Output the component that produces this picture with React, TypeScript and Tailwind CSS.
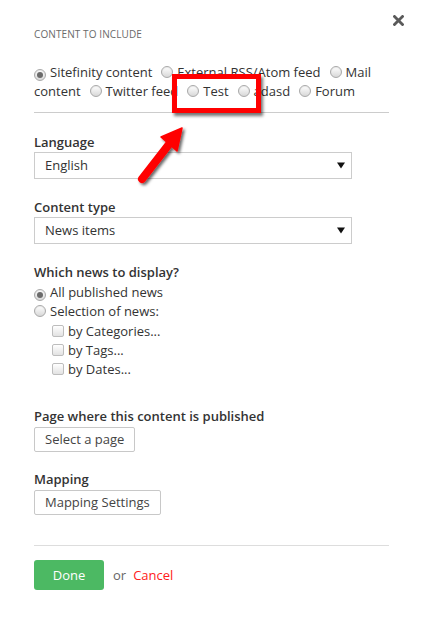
import React from "react";

function Radio({ checked = false }: { checked?: boolean }) {
  return (
    <span className="inline-flex items-center justify-center w-[12px] h-[12px] rounded-full border border-[#a9a9a9] bg-gradient-to-b from-[#ffffff] to-[#d8d8d8] align-[-1px] mr-[4px] shadow-[inset_0_1px_1px_rgba(0,0,0,0.08)]">
      {checked && <span className="block w-[6px] h-[6px] rounded-full bg-[#6b6b6b]" />}
    </span>
  );
}

function Checkbox() {
  return (
    <span className="inline-block w-[12px] h-[12px] rounded-[2px] border border-[#bdbdbd] bg-gradient-to-b from-[#ffffff] to-[#e2e2e2] align-[-1px] mr-[4px]" />
  );
}

function Option({ label, checked }: { label: string; checked?: boolean }) {
  return (
    <span className="mr-[9px]">
      <Radio checked={checked} />
      {label}
    </span>
  );
}

function Select({ value }: { value: string }) {
  return (
    <div className="flex items-center justify-between w-[318px] h-[27px] border border-[#cccccc] pl-[10px] pr-[6px] text-[#333]">
      <span>{value}</span>
      <svg width="8" height="7" viewBox="0 0 8 7">
        <path d="M0 0.5 L8 0.5 L4 6.5 Z" fill="#111" />
      </svg>
    </div>
  );
}

function Label({ children }: { children: React.ReactNode }) {
  return <div className="font-semibold text-[#333]">{children}</div>;
}

export default function App() {
  return (
    <div
      className="relative w-[423px] h-[626px] bg-white overflow-hidden text-[13px] leading-[19px] text-[#333]"
      style={{ fontFamily: '"Open Sans", "Liberation Sans", sans-serif' }}
    >
      <button className="absolute top-[15px] right-[19px] w-[11px] h-[11px] flex items-center justify-center">
        <svg width="11" height="11" viewBox="0 0 11 11">
          <path d="M1.5 1.5 L9.5 9.5 M9.5 1.5 L1.5 9.5" stroke="#5a5a5a" strokeWidth="2.8" strokeLinecap="square" />
        </svg>
      </button>

      <div className="px-[34px] pt-[27px]">
        <div className="text-[10px] leading-[14px] uppercase text-[#6a6a6a] tracking-[0.1px]">Content to include</div>

        <div className="mt-[22px] text-[#333]">
          <Option label="Sitefinity content" checked />
          <Option label="External RSS/Atom feed" />
          <Radio />
          Mail content
          <span className="ml-[9px]" />
          <Option label="Twitter feed" />
          <Option label="Test" />
          <Option label="adasd" />
          <Option label="Forum" />
        </div>

        <div className="mt-[11px] border-t border-[#cccccc]" />

        <div className="mt-[20px]">
          <Label>Language</Label>
          <Select value="English" />
        </div>

        <div className="mt-[19px]">
          <Label>Content type</Label>
          <Select value="News items" />
        </div>

        <div className="mt-[19px]">
          <Label>Which news to display?</Label>
          <div className="mt-[1px]">
            <Radio checked />
            All published news
          </div>
          <div>
            <Radio />
            Selection of news:
          </div>
          <div className="pl-[18px] mt-[1px]">
            <div>
              <Checkbox />
              by Categories...
            </div>
            <div>
              <Checkbox />
              by Tags...
            </div>
            <div>
              <Checkbox />
              by Dates...
            </div>
          </div>
        </div>

        <div className="mt-[28px]">
          <Label>Page where this content is published</Label>
          <button className="mt-[1px] h-[25px] px-[10px] border border-[#c8c8c8] rounded-[2px] text-[#444] leading-[23px]">
            Select a page
          </button>
        </div>

        <div className="mt-[18px]">
          <Label>Mapping</Label>
          <button className="mt-[1px] h-[25px] px-[10px] border border-[#c8c8c8] rounded-[2px] text-[#444] leading-[23px]">
            Mapping Settings
          </button>
        </div>

        <div className="mt-[30px] border-t border-[#dddddd]" />

        <div className="mt-[14px] flex items-center">
          <button className="w-[70px] h-[30px] rounded-[3px] bg-[#4cb963] text-white">Done</button>
          <span className="ml-[9px] text-[#666]">or</span>
          <span className="ml-[7px] text-[#ff2020]">Cancel</span>
        </div>
      </div>

      {/* annotation overlay */}
      <div className="absolute left-[172px] top-[74px] w-[89px] h-[39px] border-[5px] border-[#ff0000] shadow-[2px_3px_3px_rgba(0,0,0,0.55)]" />
      <svg className="absolute left-0 top-0 pointer-events-none" width="423" height="626">
        <defs>
          <filter id="sh" x="-20%" y="-20%" width="140%" height="140%">
            <feDropShadow dx="2" dy="2" stdDeviation="1.5" floodColor="#000" floodOpacity="0.6" />
          </filter>
        </defs>
        <g filter="url(#sh)">
          <line x1="142" y1="179" x2="170" y2="143" stroke="#ff0000" strokeWidth="8" strokeLinecap="round" />
          <path d="M182 128 L161 137 L177 151 Z" fill="#ff0000" stroke="#ff0000" strokeWidth="1.5" strokeLinejoin="round" />
        </g>
      </svg>
    </div>
  );
}
